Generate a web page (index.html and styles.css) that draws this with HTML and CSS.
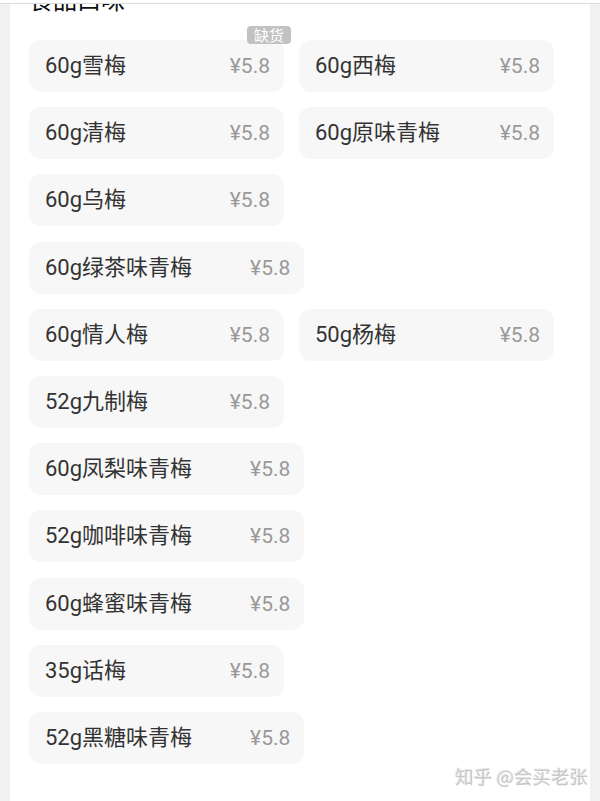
FILE: index.html
```html
<html>
<head>
  <meta charset="utf-8">
  <title>食品口味</title>
  <link rel="stylesheet" href="styles.css">
</head>
<body>

<div id="topbar"></div>

<div id="panel">
  <div id="title_wrapper">
    <h2 id="title">食品口味</h2>
  </div>

  <div id="options">
    <div class="option">
      <span class="option_name">60g雪梅</span>
      <span class="option_price">¥5.8</span>
      <span class="badge">缺货</span>
    </div>
    <div class="option">
      <span class="option_name">60g西梅</span>
      <span class="option_price">¥5.8</span>
    </div>
    <div class="option">
      <span class="option_name">60g清梅</span>
      <span class="option_price">¥5.8</span>
    </div>
    <div class="option">
      <span class="option_name">60g原味青梅</span>
      <span class="option_price">¥5.8</span>
    </div>
    <div class="option">
      <span class="option_name">60g乌梅</span>
      <span class="option_price">¥5.8</span>
    </div>
    <div class="option">
      <span class="option_name">60g绿茶味青梅</span>
      <span class="option_price">¥5.8</span>
    </div>
    <div class="option">
      <span class="option_name">60g情人梅</span>
      <span class="option_price">¥5.8</span>
    </div>
    <div class="option">
      <span class="option_name">50g杨梅</span>
      <span class="option_price">¥5.8</span>
    </div>
    <div class="option">
      <span class="option_name">52g九制梅</span>
      <span class="option_price">¥5.8</span>
    </div>
    <div class="option">
      <span class="option_name">60g凤梨味青梅</span>
      <span class="option_price">¥5.8</span>
    </div>
    <div class="option">
      <span class="option_name">52g咖啡味青梅</span>
      <span class="option_price">¥5.8</span>
    </div>
    <div class="option">
      <span class="option_name">60g蜂蜜味青梅</span>
      <span class="option_price">¥5.8</span>
    </div>
    <div class="option">
      <span class="option_name">35g话梅</span>
      <span class="option_price">¥5.8</span>
    </div>
    <div class="option">
      <span class="option_name">52g黑糖味青梅</span>
      <span class="option_price">¥5.8</span>
    </div>
  </div>

  <div id="watermark">知乎 @会买老张</div>
</div>

</body>
</html>
```

FILE: styles.css
```css
body {
  margin: 0;
  background: #f2f2f2;
  font-family: Roboto, "Noto Sans CJK SC", sans-serif;
}
#topbar {
  height: 3px;
  background: #fff;
  border-bottom: 1px solid #dcdcdc;
}
#panel {
  margin: 0 10px;
  min-height: 797px;
  background: #fff;
  padding: 0 20px 0 19px;
  box-sizing: border-box;
}
#title_wrapper {
  height: 12px;
  overflow: hidden;
}
#title {
  margin: -17px 0 0 0;
  font-size: 24px;
  line-height: 24px;
  font-weight: normal;
  color: #111;
  font-family: "Noto Sans CJK SC", sans-serif;
}
#options {
  margin-top: 24px;
  display: flex;
  flex-wrap: wrap;
  column-gap: 15px;
  row-gap: 15.2px;
}
.option {
  position: relative;
  display: flex;
  align-items: baseline;
  justify-content: space-between;
  gap: 58px;
  min-width: 255px;
  height: 52px;
  padding: 14px 14px 0 16px;
  box-sizing: border-box;
  background: #f7f7f7;
  border-radius: 12px;
}
.option_name {
  font-size: 22px;
  line-height: 24px;
  color: #333;
}
.option_price {
  font-size: 21px;
  line-height: 24px;
  color: #999;
}
.badge {
  position: absolute;
  top: -14px;
  right: -7px;
  width: 44px;
  height: 18px;
  line-height: 18px;
  text-align: center;
  font-size: 15px;
  color: #fff;
  background: #c2c2c2;
  border-radius: 4px;
  font-family: "Noto Sans CJK SC", sans-serif;
}
#watermark {
  margin: 2px -18px 0 0;
  text-align: right;
  font-size: 18.5px;
  line-height: 20px;
  color: #c8c8c8;
  text-shadow: 1px 1px 0 #fff, -1px -1px 0 #e6e6e6;
  font-family: "Noto Sans CJK SC", sans-serif;
}
```
